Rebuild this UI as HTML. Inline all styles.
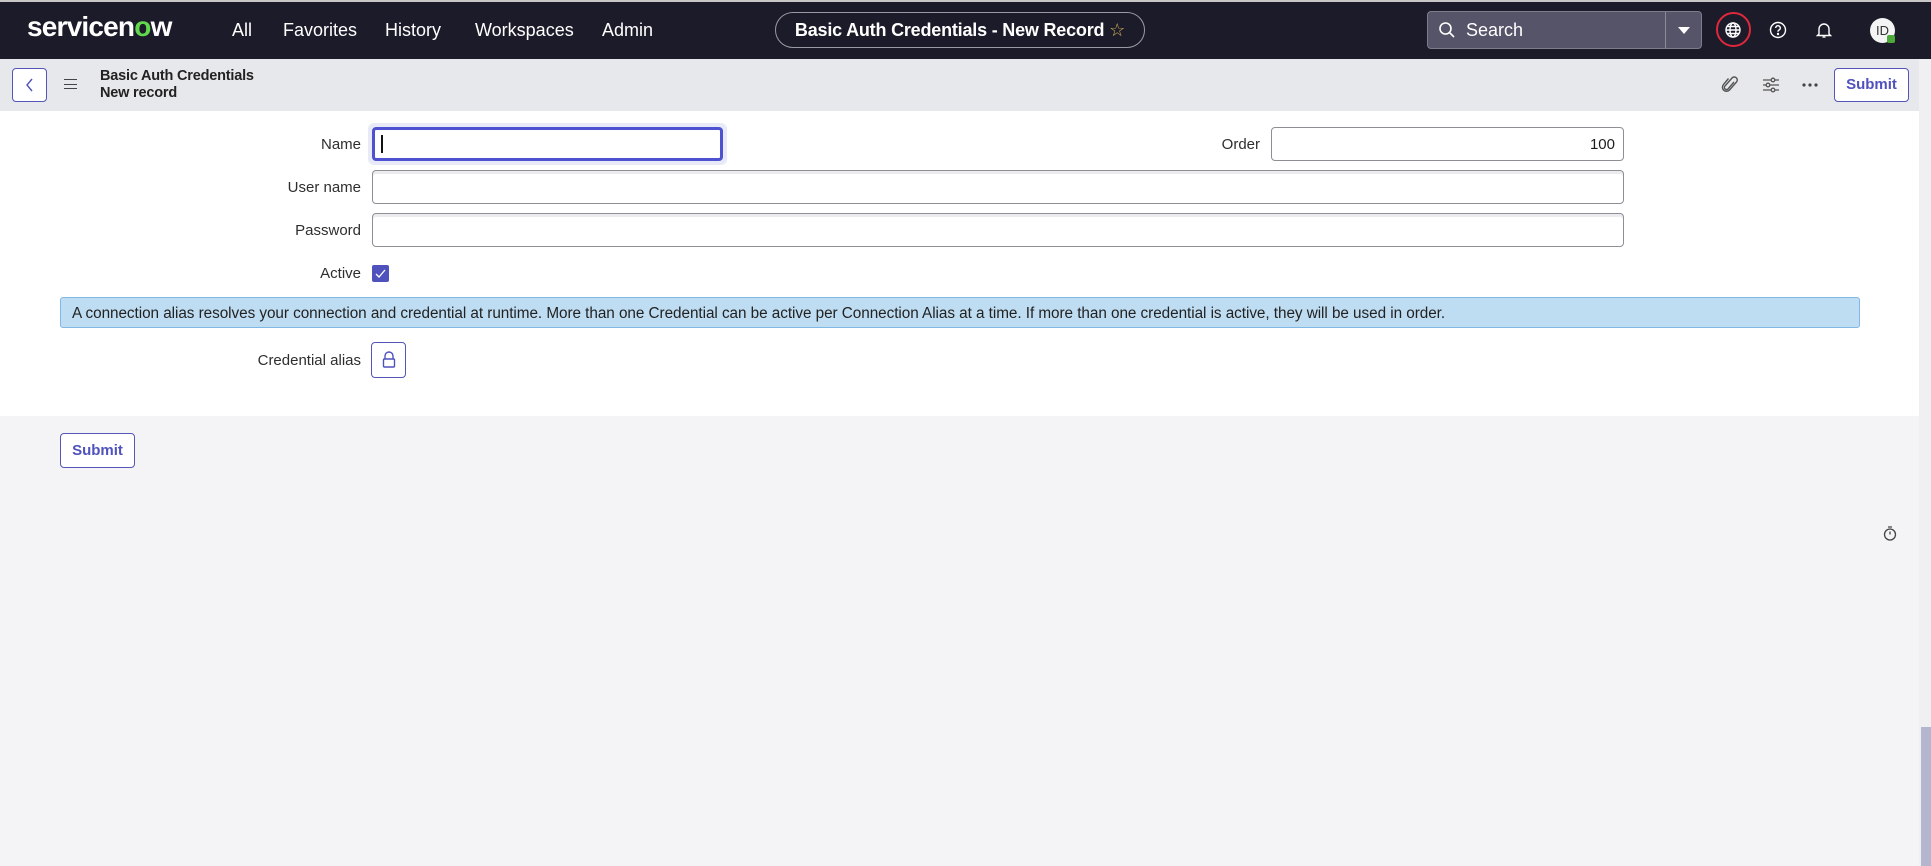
<!DOCTYPE html>
<html><head><meta charset="utf-8"><style>
*{box-sizing:border-box;margin:0;padding:0}
body{width:1931px;height:866px;overflow:hidden;background:#f4f4f6;font-family:"Liberation Sans",Arial,sans-serif;color:#1d1d1d;position:relative}
.abs{position:absolute}
#hdr{left:0;top:0;width:1931px;height:59px;background:#1b1b29;border-top:2px solid #c8c8c8}
.nav{color:#fff;font-size:18px;top:18px}
#bar{left:0;top:59px;width:1919px;height:52px;background:#e7e8eb}
#main{left:0;top:111px;width:1919px;height:305px;background:#fff}
.lbl{font-size:15px;color:#2e2e2e;text-align:right;width:300px}
.inp{border:1px solid #8e8f96;border-radius:4px;background:#fff;height:34px;box-shadow:inset 0 3px 0 #ececef}
.btn{border:1px solid #5456b8;border-radius:4px;background:#fff;color:#4f52bd;font-weight:bold;font-size:15px;text-align:center}
</style></head><body>
<div id="hdr" class="abs">
 <div class="abs" style="left:27px;top:9px;color:#fff;font-size:28px;font-weight:bold;letter-spacing:-0.8px">servicen<span style="color:#62d84e">o</span>w</div>
 <div class="abs nav" style="left:232px">All</div>
 <div class="abs nav" style="left:283px">Favorites</div>
 <div class="abs nav" style="left:385px">History</div>
 <div class="abs nav" style="left:475px">Workspaces</div>
 <div class="abs nav" style="left:602px">Admin</div>
 <div class="abs" style="left:775px;top:10px;width:370px;height:36px;border:1px solid #9a9aa4;border-radius:18px;color:#fff;font-weight:bold;font-size:18px;text-align:center;line-height:34px;letter-spacing:-0.2px">Basic Auth Credentials - New Record <span style="color:#d8b35a;font-weight:normal">☆</span></div>
 <div class="abs" style="left:1427px;top:9px;width:275px;height:38px;background:#555469;border:1px solid #7c7c8c;border-radius:4px">
  <svg class="abs" style="left:10px;top:9px" width="18" height="18" viewBox="0 0 18 18"><circle cx="7.5" cy="7.5" r="5.5" fill="none" stroke="#fff" stroke-width="1.6"/><path d="M11.5 11.5L16 16" stroke="#fff" stroke-width="1.6"/></svg>
  <div class="abs" style="left:38px;top:8px;color:#fff;font-size:18px">Search</div>
  <div class="abs" style="left:237px;top:0;width:1px;height:36px;background:#8a8a98"></div>
  <div class="abs" style="left:250px;top:15px;width:0;height:0;border-left:6px solid transparent;border-right:6px solid transparent;border-top:7px solid #fff"></div>
 </div>
 <div class="abs" style="left:1716px;top:10px;width:35px;height:35px;border:2px solid #e0283c;border-radius:50%"></div>
 <svg class="abs" style="left:1724px;top:19px" width="18" height="18" viewBox="0 0 18 18" fill="none" stroke="#fff" stroke-width="1.4"><circle cx="9" cy="9" r="7"/><ellipse cx="9" cy="9" rx="3" ry="7"/><path d="M2 9h14M3 5.5h12M3 12.5h12"/></svg>
 <svg class="abs" style="left:1769px;top:19px" width="18" height="18" viewBox="0 0 18 18" fill="none" stroke="#fff" stroke-width="1.4"><circle cx="9" cy="9" r="7.5"/><path d="M6.7 7a2.3 2.3 0 1 1 3 2.2c-.6.3-.7.7-.7 1.5"/><circle cx="9" cy="13" r=".5" fill="#fff"/></svg>
 <svg class="abs" style="left:1816px;top:19px" width="16" height="18" viewBox="0 0 16 18" fill="none" stroke="#fff" stroke-width="1.4"><path d="M3 13V8a5 5 0 0 1 10 0v5l1.5 1.5h-13z"/><path d="M6.5 16h3"/></svg>
 <div class="abs" style="left:1870px;top:16px;width:25px;height:25px;border-radius:50%;background:#f4f4f4;color:#333;font-size:13px;text-align:center;line-height:25px">ID</div>
 <div class="abs" style="left:1887px;top:33px;width:8px;height:8px;background:#4ca93a;border-radius:2px"></div>
</div>
<div id="bar" class="abs">
 <div class="abs btn" style="left:12px;top:9px;width:35px;height:34px"><svg width="12" height="16" viewBox="0 0 12 16" style="margin-top:8px"><path d="M8 2L3 8l5 6" fill="none" stroke="#4f52bd" stroke-width="1.4"/></svg></div>
 <div class="abs" style="left:64px;top:20px;width:13px;height:10px;border-top:1.5px solid #444;border-bottom:1.5px solid #444"></div>
 <div class="abs" style="left:64px;top:24.5px;width:13px;height:1.5px;background:#444"></div>
 <div class="abs" style="left:100px;top:9px;font-size:14.5px;font-weight:bold;color:#222;line-height:17px;letter-spacing:-0.2px">Basic Auth Credentials<br>New record</div>
 <svg class="abs" style="left:1721px;top:16px" width="18" height="20" viewBox="0 0 18 20" fill="none" stroke="#555" stroke-width="1.4"><path d="M13 7l-6 7a2 2 0 0 1-3-3l7-8a3 3 0 0 1 4.5 4l-7 8a4 4 0 0 1-6-5.5l5-6"/></svg>
 <svg class="abs" style="left:1762px;top:17px" width="18" height="18" viewBox="0 0 18 18" fill="none" stroke="#555" stroke-width="1.3"><path d="M1 4h16M1 9h16M1 14h16"/><circle cx="11" cy="4" r="1.8" fill="#e7e8eb"/><circle cx="6" cy="9" r="1.8" fill="#e7e8eb"/><circle cx="11" cy="14" r="1.8" fill="#e7e8eb"/></svg>
 <svg class="abs" style="left:1802px;top:24px" width="16" height="4" viewBox="0 0 16 4" fill="#444"><circle cx="2" cy="2" r="1.6"/><circle cx="8" cy="2" r="1.6"/><circle cx="14" cy="2" r="1.6"/></svg>
 <div class="abs btn" style="left:1834px;top:9px;width:75px;height:34px;line-height:32px">Submit</div>
</div>
<div class="abs" style="left:1919px;top:59px;width:12px;height:807px;background:#f0f0f2"></div>
<div class="abs" style="left:1921px;top:727px;width:10px;height:139px;background:#b4b6cf"></div>
<div id="main" class="abs"></div>
<div class="abs lbl" style="left:61px;top:136px">Name</div>
<div class="abs" style="left:368px;top:123px;width:359px;height:42px;border-radius:6px;background:#e9eaf7"></div>
<div class="abs" style="left:372px;top:127px;width:351px;height:34px;border:3px solid #4f52d0;border-radius:4px;background:#fff"></div>
<div class="abs" style="left:381px;top:135px;width:2px;height:18px;background:#111"></div>
<div class="abs lbl" style="left:960px;top:136px">Order</div>
<div class="abs inp" style="left:1271px;top:127px;width:353px;box-shadow:none;font-size:15px;text-align:right;padding:8px 8px 0 0">100</div>
<div class="abs lbl" style="left:61px;top:179px">User name</div>
<div class="abs inp" style="left:372px;top:170px;width:1252px"></div>
<div class="abs lbl" style="left:61px;top:222px">Password</div>
<div class="abs inp" style="left:372px;top:213px;width:1252px"></div>
<div class="abs lbl" style="left:61px;top:265px">Active</div>
<div class="abs" style="left:372px;top:265px;width:17px;height:17px;background:#4f52bd;border-radius:2px"><svg width="17" height="17" viewBox="0 0 17 17"><path d="M4 9l3 3 6-7" fill="none" stroke="#fff" stroke-width="1.3"/></svg></div>
<div class="abs" style="left:60px;top:297px;width:1800px;height:31px;background:#bfddf2;border:1px solid #7fb8e4;border-radius:3px;font-size:15.3px;color:#222;padding:7px 0 0 11px;white-space:nowrap;letter-spacing:-0.05px">A connection alias resolves your connection and credential at runtime. More than one Credential can be active per Connection Alias at a time. If more than one credential is active, they will be used in order.</div>
<div class="abs lbl" style="left:61px;top:352px">Credential alias</div>
<div class="abs btn" style="left:371px;top:342px;width:35px;height:36px"><svg width="16" height="20" viewBox="0 0 16 20" style="margin-top:7px" fill="none" stroke="#4f52bd" stroke-width="1.4"><path d="M4 9V6a4 4 0 0 1 8 0v3"/><rect x="2.5" y="9" width="11" height="8" rx="1"/></svg></div>
<div class="abs btn" style="left:60px;top:433px;width:75px;height:35px;line-height:33px">Submit</div>
<svg class="abs" style="left:1883px;top:526px" width="14" height="15" viewBox="0 0 14 15" fill="none" stroke="#444" stroke-width="1.3"><circle cx="7" cy="8.5" r="5.5"/><path d="M7 8.5V5.5M5 1h4"/></svg>
</body></html>
